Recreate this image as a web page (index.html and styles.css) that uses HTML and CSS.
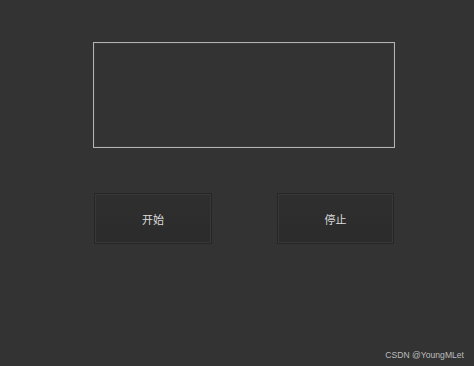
FILE: index.html
```html
<!DOCTYPE html>
<html>
<head>
<meta charset="utf-8">
<link rel="stylesheet" href="styles.css">
</head>
<body>
<div class="page">
  <div class="display"></div>
  <div class="buttons">
    <button class="btn btn-start">开始</button>
    <button class="btn btn-stop">停止</button>
  </div>
</div>
<div class="watermark">CSDN @YoungMLet</div>
</body>
</html>
```
FILE: styles.css
```css
html, body {
  margin: 0;
  padding: 0;
  width: 474px;
  height: 366px;
  background: #333333;
  overflow: hidden;
  font-family: "Noto Sans CJK SC", "Liberation Sans", sans-serif;
}
.page {
  display: flex;
  flex-direction: column;
  padding: 42px 0 0 93px;
}
.display {
  box-sizing: border-box;
  width: 302px;
  height: 106px;
  border: 1px solid #b4b4b4;
  box-shadow: inset 0 0 0 1px #3a3a3a;
  background: #333333;
}
.buttons {
  display: flex;
  margin-top: 45px;
  margin-left: 1px;
  gap: 65px;
}
.btn {
  box-sizing: border-box;
  height: 51px;
  margin: 0;
  padding: 0;
  border: 1px solid #262626;
  box-shadow: inset 0 0 0 1px #383838;
  background: linear-gradient(#2f2f2f, #2b2b2b);
  color: #dcdcdc;
  font-family: "Noto Sans CJK SC", "Liberation Sans", sans-serif;
  font-size: 11px;
  padding-top: 1px;
}
.btn-start { width: 118px; }
.btn-stop { width: 117px; }
.watermark {
  position: absolute;
  right: 10px;
  top: 349px;
  white-space: nowrap;
  line-height: 12px;
  font-family: "Liberation Sans", sans-serif;
  font-size: 8.6px;
  color: #bdbdbd;
}
```
